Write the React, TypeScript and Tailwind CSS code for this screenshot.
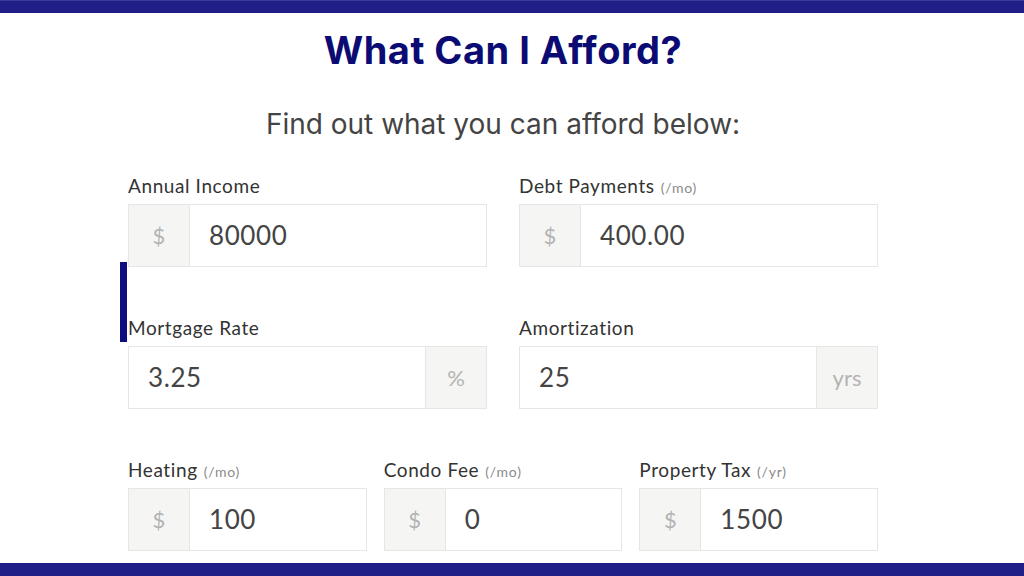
import React from 'react';

// Affordability calculator form — static recreation, local display only.

const LABEL_FONT = { fontFamily: 'Lato, "Noto Sans", sans-serif' };

function Label({ text, unit }: { text: string; unit?: string }) {
  return (
    <div className="mb-[7px] h-[22px] text-[19px] leading-[22px] tracking-[0.6px] text-[#333333]" style={LABEL_FONT}>
      {text}
      {unit && <span className="ml-[6px] text-[14px] tracking-[0.8px] text-[#8a8a8a]">{unit}</span>}
    </div>
  );
}

function Field({
  label,
  unit,
  value,
  prefix,
  suffix,
}: {
  label: string;
  unit?: string;
  value: string;
  prefix?: string;
  suffix?: string;
}) {
  const affix = (t: string, side: 'l' | 'r') => (
    <div
      className={
        'flex w-[61px] shrink-0 items-center justify-center bg-[#f5f6f4] text-[22px] text-[#b3b3b3] ' +
        (side === 'l' ? 'border-r border-[#e6e6e6]' : 'border-l border-[#e6e6e6]')
      }
      style={LABEL_FONT}
    >
      {t}
    </div>
  );
  return (
    <div className="min-w-0 flex-1">
      <Label text={label} unit={unit} />
      <div className="flex h-[63px] border border-[#e6e6e6] bg-white">
        {prefix && affix(prefix, 'l')}
        <div className="flex flex-1 items-center pl-[19px] text-[26px] tracking-[0.6px] text-[#444444]" style={LABEL_FONT}>
          {value}
        </div>
        {suffix && affix(suffix, 'r')}
      </div>
    </div>
  );
}

export default function App() {
  return (
    <div className="relative flex h-screen flex-col overflow-hidden bg-white">
      <div className="h-[13px] shrink-0 border-t border-[#3a3a9a] bg-[#1f1f87]" />
      <main className="flex-1">
        <div className="ml-[128px] w-[750px]">
          <h1
            className="mt-[15px] text-center text-[38px] font-bold leading-[44px] tracking-[0.5px] text-[#0b0b73]"
            style={{ fontFamily: 'Inter, "Liberation Sans", sans-serif' }}
          >
            What Can I Afford?
          </h1>
          <p
            className="mt-[36px] text-center text-[28px] leading-[32px] text-[#444444]"
            style={{ fontFamily: 'Inter, "Liberation Sans", sans-serif' }}
          >
            Find out what you can afford below:
          </p>

          <div className="mt-[35px] flex gap-[32px]">
            <Field label="Annual Income" prefix="$" value="80000" />
            <Field label="Debt Payments" unit="(/mo)" prefix="$" value="400.00" />
          </div>

          <div className="mt-[50px] flex gap-[32px]">
            <Field label="Mortgage Rate" suffix="%" value="3.25" />
            <Field label="Amortization" suffix="yrs" value="25" />
          </div>

          <div className="mt-[50px] flex gap-[17px]">
            <Field label="Heating" unit="(/mo)" prefix="$" value="100" />
            <Field label="Condo Fee" unit="(/mo)" prefix="$" value="0" />
            <Field label="Property Tax" unit="(/yr)" prefix="$" value="1500" />
          </div>
        </div>
      </main>
      <div className="h-[13px] shrink-0 bg-[#1f1f87]" />

      {/* focus marker beside the mortgage rate row */}
      <div className="absolute left-[120px] top-[262px] h-[80px] w-[7px] bg-[#0d0d80]" />
    </div>
  );
}
